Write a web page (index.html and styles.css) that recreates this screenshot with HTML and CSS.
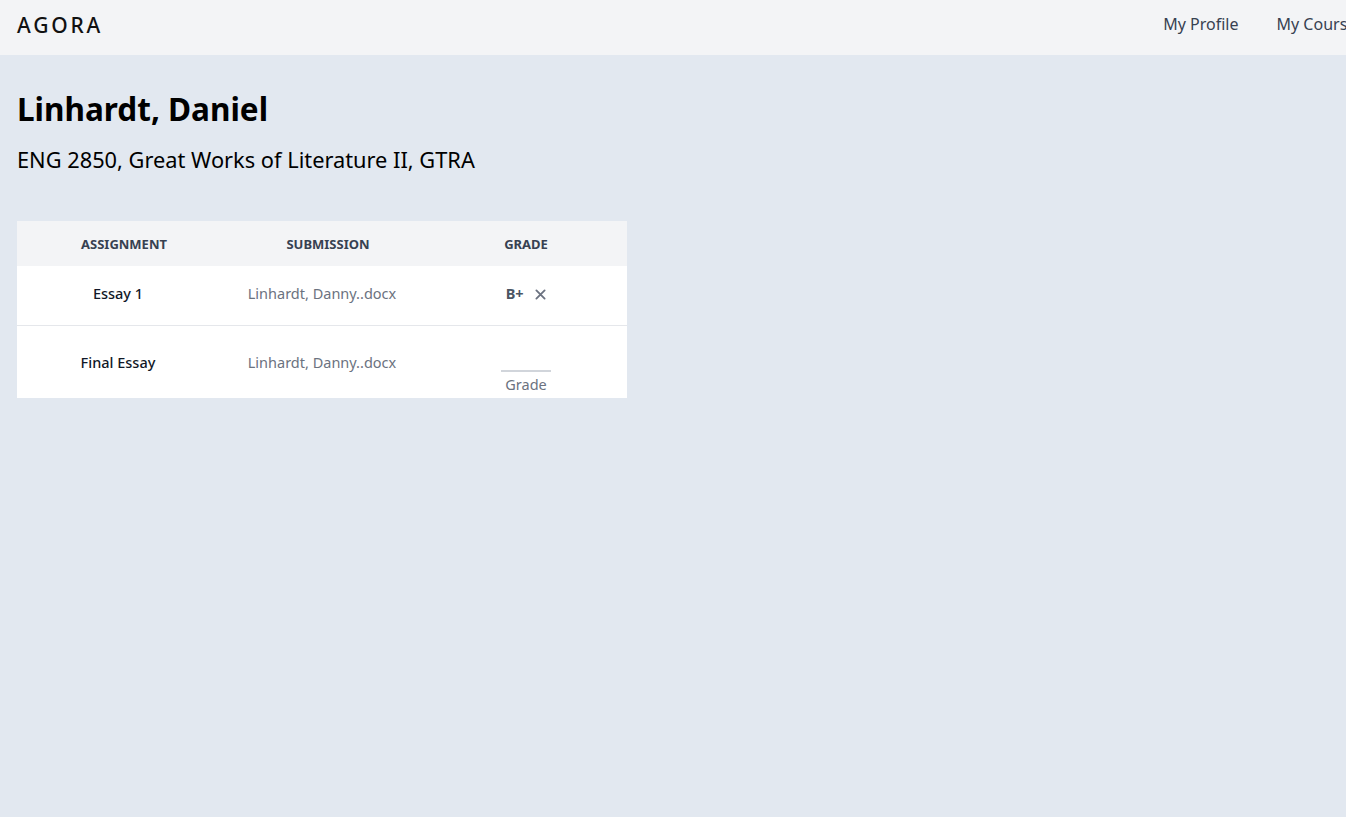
FILE: index.html
```html
<!DOCTYPE html>
<html lang="en">
<head>
    <meta charset="UTF-8">
    <title>Agora - Grades</title>
    <link rel="stylesheet" href="styles.css">
</head>
<body>
    <nav class="navbar">
        <div class="brand">AGORA</div>
        <div class="nav-links">
            <a href="#">My Profile</a>
            <a href="#">My Courses</a>
        </div>
    </nav>

    <main class="page">
        <h1>Linhardt, Daniel</h1>
        <h2>ENG 2850, Great Works of Literature II, GTRA</h2>

        <table class="grades">
            <thead>
                <tr>
                    <th class="col-assignment">Assignment</th>
                    <th class="col-submission">Submission</th>
                    <th class="col-grade">Grade</th>
                </tr>
            </thead>
            <tbody>
                <tr class="row-graded">
                    <td class="assignment">Essay 1</td>
                    <td class="submission">Linhardt, Danny..docx</td>
                    <td class="grade">
                        <span class="grade-value">B+</span>
                        <button class="clear-btn" title="Remove grade">
                            <svg width="11" height="11" viewBox="0 0 12 12"><path d="M1.5 1.5 L10.5 10.5 M10.5 1.5 L1.5 10.5" stroke="currentColor" stroke-width="2" stroke-linecap="round"/></svg>
                        </button>
                    </td>
                </tr>
                <tr class="row-open">
                    <td class="assignment">Final Essay</td>
                    <td class="submission">Linhardt, Danny..docx</td>
                    <td class="grade">
                        <input type="text" class="grade-input" placeholder="Grade">
                    </td>
                </tr>
            </tbody>
        </table>
    </main>
</body>
</html>
```

FILE: styles.css
```css
html, body {
    overflow-x: hidden;
}

body {
    margin: 0;
    min-height: 100vh;
    background: #e2e8f0;
    color: #000;
    font-family: "Noto Sans", "Open Sans", sans-serif;
}

.navbar {
    display: flex;
    justify-content: space-between;
    align-items: center;
    height: 55px;
    padding: 0 0 0 17px;
    width: calc(100% + 18px);
    box-sizing: border-box;
    background: #f3f4f6;
}

.brand {
    font-size: 21px;
    letter-spacing: 2.8px;
    font-weight: 500;
    color: #111;
    margin-top: -5px;
}

.nav-links {
    display: flex;
    gap: 38px;
    margin-top: -7px;
}

.nav-links a {
    color: #374151;
    text-decoration: none;
    font-size: 16px;
}

.page {
    padding: 0 17px;
}

h1 {
    margin: 30px 0 0;
    font-size: 31.5px;
    font-weight: 700;
    line-height: 48px;
}

h2 {
    margin: 12px 0 0;
    font-size: 21.8px;
    font-weight: 400;
    line-height: 30px;
}

.grades {
    margin-top: 46px;
    width: 610px;
    border-collapse: collapse;
    background: #fff;
}

.grades th {
    height: 45px;
    padding: 0;
    background: #f3f4f6;
    color: #374151;
    font-size: 13px;
    font-weight: 700;
    text-transform: uppercase;
    text-align: center;
}

.col-assignment { width: 214px; }
.col-submission { width: 194px; }

.grades td {
    padding: 0;
    text-align: center;
    font-size: 14.5px;
}

.row-graded td {
    height: 59px;
    padding-bottom: 4px;
    box-sizing: border-box;
    border-bottom: 1px solid #e5e7eb;
}

.row-open td {
    height: 72px;
}

.assignment {
    color: #111827;
    font-weight: 500;
    padding-right: 12px !important;
}

.submission {
    color: #6b7280;
    padding-right: 12px !important;
}

.grade-value {
    color: #4b5563;
    font-weight: 700;
}

.clear-btn {
    border: none;
    background: none;
    padding: 0;
    margin-left: 8px;
    color: #6b7280;
    cursor: pointer;
    vertical-align: -1px;
}

.grade-input {
    width: 50px;
    margin-top: 40px;
    padding: 2px 0 0;
    border: none;
    border-top: 2px solid #d1d5db;
    background: transparent;
    text-align: center;
    font-family: inherit;
    font-size: 14.5px;
    color: #374151;
    outline: none;
}

.grade-input::placeholder {
    color: #6b7280;
}
```
